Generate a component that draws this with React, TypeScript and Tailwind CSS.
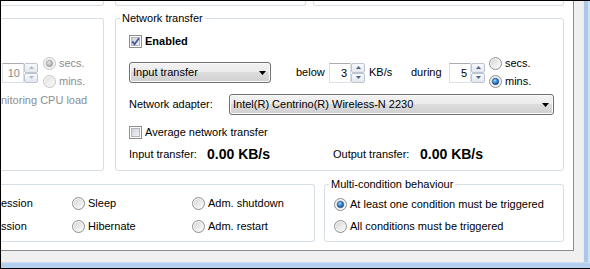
import React from "react";

// Windows 7 style dialog fragment: network transfer condition settings

function Defs() {
  return (
    <svg className="block h-0 w-0" aria-hidden>
      <defs>
        <linearGradient id="radio-fill" x1="0" y1="0" x2="1" y2="1">
          <stop offset="0" stopColor="#d6d6d6" />
          <stop offset="1" stopColor="#fbfbfb" />
        </linearGradient>
        <radialGradient id="radio-dot" cx="40%" cy="35%" r="70%">
          <stop offset="0" stopColor="#a9dcff" />
          <stop offset="0.45" stopColor="#3b8ede" />
          <stop offset="1" stopColor="#0f3f80" />
        </radialGradient>
        <radialGradient id="radio-dot-off" cx="40%" cy="35%" r="70%">
          <stop offset="0" stopColor="#e8e8e8" />
          <stop offset="1" stopColor="#9a9a9a" />
        </radialGradient>
        <linearGradient id="check-fill" x1="0" y1="0" x2="1" y2="1">
          <stop offset="0" stopColor="#cbcfd5" />
          <stop offset="1" stopColor="#f6f6f6" />
        </linearGradient>
      </defs>
    </svg>
  );
}

function Radio({ checked = false, disabled = false }: { checked?: boolean; disabled?: boolean }) {
  return (
    <svg width="13" height="13" viewBox="0 0 13 13" className="shrink-0">
      <circle cx="6.5" cy="6.5" r="6" fill="#f4f4f4" stroke={disabled ? "#c4c4c4" : "#8e8f8f"} />
      <circle cx="6.5" cy="6.5" r="4.5" fill="url(#radio-fill)" opacity={disabled ? 0.6 : 1} />
      {checked && (
        <circle
          cx="6.5"
          cy="6.5"
          r="3.2"
          fill={disabled ? "url(#radio-dot-off)" : "url(#radio-dot)"}
          stroke={disabled ? "#9c9c9c" : "#1b4a85"}
          strokeWidth="0.6"
        />
      )}
    </svg>
  );
}

function Checkbox({ checked = false }: { checked?: boolean }) {
  return (
    <svg width="13" height="13" viewBox="0 0 13 13" className="shrink-0">
      <rect x="0.5" y="0.5" width="12" height="12" fill="#fdfdfd" stroke="#8e8f8f" />
      <rect x="2.5" y="2.5" width="8" height="8" fill="url(#check-fill)" stroke="#b3b7bd" />
      {checked && (
        <path d="M3.3 6.4 L5.5 9.2 L10 3.2" fill="none" stroke="#3f58a0" strokeWidth="1.8" />
      )}
    </svg>
  );
}

function SpinButton({ up = false, disabled = false }: { up?: boolean; disabled?: boolean }) {
  return (
    <div className="flex h-[10px] w-[14px] items-center justify-center rounded-[2px] border border-[#bcc6d2] bg-[linear-gradient(#f8f9fb,#e3e8ee)]">
      <svg width="5" height="3" viewBox="0 0 5 3">
        <path d={up ? "M0 3 L2.5 0 L5 3 Z" : "M0 0 H5 L2.5 3 Z"} fill={disabled ? "#b0b9c6" : "#4d6185"} />
      </svg>
    </div>
  );
}

function Spin({ value, disabled = false }: { value: string; disabled?: boolean }) {
  return (
    <div className="flex h-[20px] shrink-0">
      <div
        className={`h-[20px] w-[22px] border border-[#dbdfe6] border-t-[#abadb3] bg-white pr-[3px] text-right leading-[18px] ${
          disabled ? "text-[#8d8d8d]" : "text-black"
        }`}
      >
        {value}
      </div>
      <div className="flex flex-col">
        <SpinButton up disabled={disabled} />
        <SpinButton disabled={disabled} />
      </div>
    </div>
  );
}

function Combo({ text, className }: { text: string; className: string }) {
  return (
    <div
      className={`flex h-[21px] shrink-0 items-center rounded-[3px] border border-[#707070] bg-[linear-gradient(#f2f2f2,#ebebeb_50%,#dddddd_50%,#cfcfcf)] pl-[3px] pr-[4px] shadow-[inset_0_0_0_1px_#fbfbfb] ${className}`}
    >
      <span className="flex-1 whitespace-nowrap">{text}</span>
      <svg width="7" height="4" viewBox="0 0 7 4">
        <path d="M0 0 H7 L3.5 4 Z" fill="#000" />
      </svg>
    </div>
  );
}

function RadioRow({
  label,
  checked = false,
  disabled = false,
}: {
  label: string;
  checked?: boolean;
  disabled?: boolean;
}) {
  return (
    <div className="flex h-[13px] items-center whitespace-nowrap">
      <Radio checked={checked} disabled={disabled} />
      <span className="ml-[3px]">{label}</span>
    </div>
  );
}

export default function App() {
  return (
    <div className="h-[269px] w-[590px] overflow-hidden bg-black py-[1px] pl-[1px] font-['Liberation_Sans',Arial,sans-serif] text-[11px] leading-[13px] text-black">
      <Defs />
      <div className="flex h-full flex-col">
        <div className="flex flex-1">
          <div className="w-[582px] bg-[#f0f0f0]">
            <div className="h-[250px] w-[573px] border-r border-b border-[#898c95] bg-white">
              {/* upper groups, cut off by the crop */}
              <div className="flex h-[5px]">
                <div className="h-[5px] w-[103px] rounded-br-[3px] border-r border-b border-[#d5dfe5]" />
                <div className="ml-[11px] h-[5px] w-[191px] rounded-b-[3px] border-x border-b border-[#d5dfe5]" />
                <div className="ml-[7px] h-[5px] w-[251px] rounded-b-[3px] border-x border-b border-[#d5dfe5]" />
              </div>

              {/* middle row */}
              <div className="mt-[12px] flex h-[153px]">
                <div className="h-[153px] w-[103px] rounded-r-[3px] border-y border-r border-[#d5dfe5] pt-[43px] text-[#8d8d8d]">
                  <div className="flex h-[21px] items-center pl-[1px]">
                    <Spin value="10" disabled />
                    <div className="ml-[5px] flex flex-col gap-[5px]">
                      <RadioRow label="secs." checked disabled />
                      <RadioRow label="mins." disabled />
                    </div>
                  </div>
                  <div className="mt-[11px] h-[13px] whitespace-nowrap">nitoring CPU load</div>
                </div>

                <div className="relative ml-[11px] h-[153px] w-[449px] rounded-[3px] border border-[#d5dfe5] pl-[13px] pt-[16px]">
                  <span className="absolute -top-[7px] left-[4px] bg-white px-[2px]">Network transfer</span>
                  <div className="flex h-[13px] items-center">
                    <Checkbox checked />
                    <span className="ml-[3px] font-bold">Enabled</span>
                  </div>
                  <div className="mt-[14px] flex h-[21px] items-center">
                    <Combo text="Input transfer" className="w-[142px]" />
                    <span className="ml-[25px] w-[33px]">below</span>
                    <Spin value="3" />
                    <span className="ml-[4px] w-[42px]">KB/s</span>
                    <span className="w-[38px]">during</span>
                    <Spin value="5" />
                    <div className="ml-[4px] flex flex-col gap-[5px]">
                      <RadioRow label="secs." />
                      <RadioRow label="mins." checked />
                    </div>
                  </div>
                  <div className="mt-[11px] flex h-[21px] items-center">
                    <span className="w-[100px]">Network adapter:</span>
                    <Combo text="Intel(R) Centrino(R) Wireless-N 2230" className="w-[325px]" />
                  </div>
                  <div className="mt-[11px] flex h-[13px] items-center">
                    <Checkbox />
                    <span className="ml-[3px]">Average network transfer</span>
                  </div>
                  <div className="mt-[7px] flex h-[16px] items-center whitespace-nowrap">
                    <span className="w-[78px]">Input transfer:</span>
                    <span className="w-[126px] text-[14px] font-bold leading-[16px]">0.00 KB/s</span>
                    <span className="w-[87px]">Output transfer:</span>
                    <span className="text-[14px] font-bold leading-[16px]">0.00 KB/s</span>
                  </div>
                </div>
              </div>

              {/* bottom row */}
              <div className="mt-[13px] flex h-[58px]">
                <div className="grid h-[58px] w-[314px] grid-cols-[71px_120px_1fr] gap-y-[10px] rounded-r-[3px] border-y border-r border-[#d5dfe5] pt-[12px] content-start">
                  <div className="h-[13px] overflow-hidden whitespace-nowrap">ession</div>
                  <RadioRow label="Sleep" />
                  <RadioRow label="Adm. shutdown" />
                  <div className="h-[13px] overflow-hidden whitespace-nowrap">
                    <span className="-ml-[6px]">ession</span>
                  </div>
                  <RadioRow label="Hibernate" />
                  <RadioRow label="Adm. restart" />
                </div>

                <div className="relative ml-[9px] flex h-[58px] w-[240px] flex-col gap-[9px] rounded-[3px] border border-[#d5dfe5] pl-[9px] pt-[13px]">
                  <span className="absolute -top-[7px] left-[4px] bg-white px-[2px]">Multi-condition behaviour</span>
                  <RadioRow label="At least one condition must be triggered" checked />
                  <RadioRow label="All conditions must be triggered" />
                </div>
              </div>
            </div>
          </div>

          {/* window frame, right edge */}
          <div className="flex w-[7px]">
            <div className="w-[1px] bg-[#e4edf7]" />
            <div className="w-[4px] bg-[#a9c8ec]" />
            <div className="w-[2px] bg-[#d2e2f4]" />
          </div>
        </div>

        {/* window frame, bottom edge */}
        <div className="h-[6px] bg-[linear-gradient(#d7e5f5,#b3cfef_30%,#b9d3f0)]" />
      </div>
    </div>
  );
}
